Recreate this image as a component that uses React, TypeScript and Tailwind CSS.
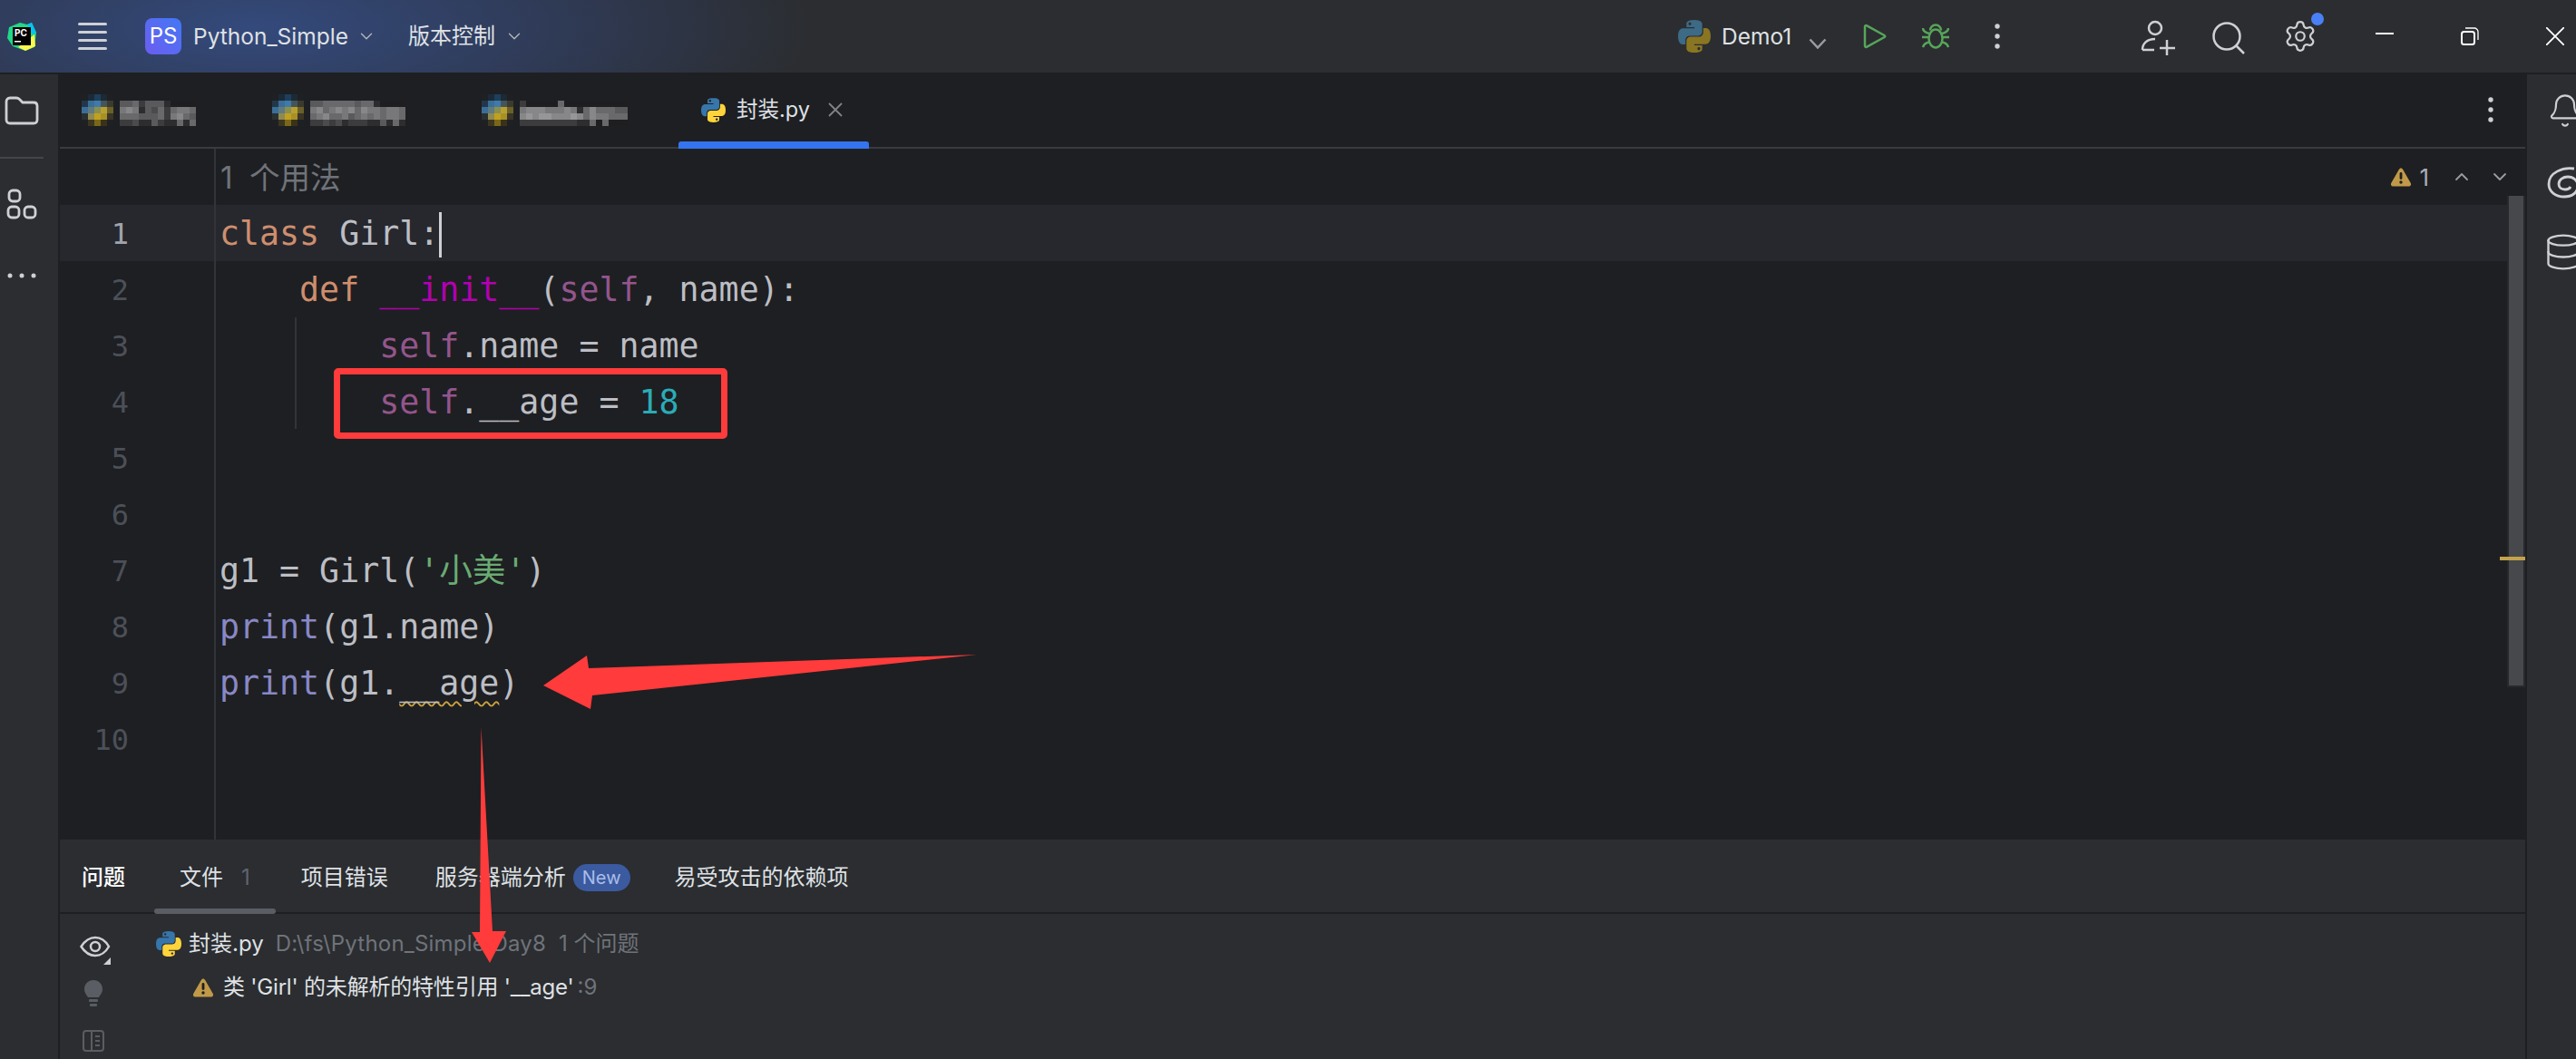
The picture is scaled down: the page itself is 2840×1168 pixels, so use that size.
import { Bell, ChevronDown, ChevronUp, Database, Settings } from 'lucide-react';

const ui = "font-[Inter,'Noto_Sans_CJK_SC',sans-serif]";

const PY_BLUE =
  'M11.914 0C5.82 0 6.2 2.656 6.2 2.656l.007 2.752h5.814v.826H3.9S0 5.789 0 11.969c0 6.18 3.403 5.96 3.403 5.96h2.03v-2.867s-.109-3.42 3.35-3.42h5.766s3.24.052 3.24-3.148V3.202S18.28 0 11.913 0zM8.708 1.85c.578 0 1.046.47 1.046 1.052 0 .581-.468 1.051-1.046 1.051-.579 0-1.046-.47-1.046-1.051 0-.582.467-1.052 1.046-1.052z';
const PY_YELLOW =
  'M12.087 24c6.092 0 5.712-2.656 5.712-2.656l-.007-2.752h-5.814v-.826h8.123s3.9.445 3.9-5.735c0-6.18-3.404-5.96-3.404-5.96h-2.03v2.867s.109 3.42-3.35 3.42H9.451s-3.24-.052-3.24 3.148v5.292S5.72 24 12.087 24zm3.206-1.85c-.578 0-1.046-.47-1.046-1.052 0-.581.468-1.051 1.046-1.051.579 0 1.046.47 1.046 1.051 0 .582-.467 1.052-1.046 1.052z';

function PyIcon({ size, muted }: { size: number; muted?: boolean }) {
  return (
    <svg width={size} height={size} viewBox="0 0 24 24" className="shrink-0">
      <path d={PY_BLUE} fill={muted ? '#3d6a85' : '#3776ab'} />
      <path d={PY_YELLOW} fill={muted ? '#8a7522' : '#ffd43b'} />
    </svg>
  );
}

function WarnIcon({ w, h }: { w: number; h: number }) {
  return (
    <svg width={w} height={h} viewBox="0 0 24 22" className="shrink-0">
      <path d="M12 1.5c1 0 1.7.6 2.2 1.5l8.6 15c.8 1.6 0 3.5-2 3.5H3.2c-2 0-2.8-1.900-2-3.500l8.600-15C10.300 2.100 11 1.500 12 1.500z" fill="#c09a48" />
      <rect x="10.600" y="6" width="2.800" height="8" rx="1.400" fill="#1e1f22" />
      <circle cx="12" cy="17" r="1.700" fill="#1e1f22" />
    </svg>
  );
}

// pixelated tab labels, blurred out in the screenshot
const iconCells = [
  ['#1e2024', '#1a2a38', '#1d3f5c', '#1c2a36', '#1e2024'],
  ['#22384a', '#3b6e96', '#3f7aa8', '#46545a', '#3a3a30'],
  ['#3a6e98', '#5f7a80', '#8a8f50', '#b8a030', '#6a6028'],
  ['#2a3030', '#8e8a50', '#c0a020', '#a89028', '#3a3524'],
  ['#1e2024', '#3d3620', '#7a6818', '#3a3218', '#1e2024'],
];

function Mosaic({ rows }: { rows: string[] }) {
  const w = rows[0].length * 7 + 42;
  return (
    <svg width={w} height={35} viewBox={`0 0 ${w} 35`} className="shrink-0 blur-[0.6px]" shapeRendering="crispEdges">
      {iconCells.map((row, y) =>
        row.map((c, x) => <rect key={`${x}-${y}`} x={x * 7} y={y * 7} width={7} height={7} fill={c} />),
      )}
      {rows.map((row, y) =>
        row.split('').map((c, x) => {
          const g = 30 + Number(c) * 15;
          return <rect key={`t${x}-${y}`} x={42 + x * 7} y={7 + y * 7} width={7} height={7} fill={`rgb(${g},${g},${g + 3})`} />;
        }),
      )}
    </svg>
  );
}

function Row({ n, active, children }: { n?: number; active?: boolean; children?: React.ReactNode }) {
  return (
    <div className={`flex h-[62px] shrink-0 items-center ${active ? 'bg-[#26282e]' : ''}`}>
      <div
        className={`flex h-full w-[172px] shrink-0 items-center justify-end border-r-2 border-[#313438] pt-[2px] pr-[94px] text-[32px] ${active ? 'text-[#a1a3ab]' : 'text-[#4b5059]'}`}
      >
        {n}
      </div>
      <div className="pt-[2px] pl-[4px] whitespace-pre text-[#bcbec4]">{children}</div>
    </div>
  );
}

const Kw = ({ children }: { children: React.ReactNode }) => <span className="text-[#cf8e6d]">{children}</span>;
const Self = ({ children }: { children: React.ReactNode }) => <span className="text-[#94558d]">{children}</span>;
const Fn = ({ children }: { children: React.ReactNode }) => <span className="text-[#8888c6]">{children}</span>;

function Kebab({ size }: { size: number }) {
  return (
    <svg width={12} height={size} viewBox={`0 0 12 ${size}`} className="shrink-0">
      <circle cx="6" cy="4" r="2.700" fill="#ced0d6" />
      <circle cx={6} cy={size / 2} r="2.700" fill="#ced0d6" />
      <circle cx={6} cy={size - 4} r="2.700" fill="#ced0d6" />
    </svg>
  );
}

function TitleBar() {
  return (
    <header
      className={`flex h-20 shrink-0 items-center justify-between bg-[#2b2d30] bg-[radial-gradient(ellipse_620px_190px_at_280px_30px,#344a7c_0%,#2f3a55_55%,#2b2d30_100%)] ${ui}`}
    >
      <div className="flex items-center">
        <svg width="32" height="32" viewBox="0 0 32 32" className="ml-2 shrink-0">
          <polygon points="2,6 14,1 22,3 27,1 32,12 30,28 20,32 6,27 0,18" fill="#21d789" />
          <polygon points="22,3 27,1 32,12 28,14" fill="#07c3f2" />
          <polygon points="30,14 31,27 20,32 12,28" fill="#fcf84a" />
          <rect x="6" y="6" width="20" height="20" fill="#000" />
          <text x="8" y="16" fontSize="10" fontWeight="700" fill="#fff" fontFamily="Inter">
            PC
          </text>
          <rect x="8" y="21" width="7" height="1.500" fill="#fff" />
        </svg>
        <div className="ml-[46px] flex h-[30px] w-8 flex-col justify-between">
          <div className="h-[3px] rounded-full bg-[#ced0d6]" />
          <div className="h-[3px] rounded-full bg-[#ced0d6]" />
          <div className="h-[3px] rounded-full bg-[#ced0d6]" />
          <div className="h-[3px] rounded-full bg-[#ced0d6]" />
        </div>
        <div className="ml-[42px] flex h-10 w-10 items-center justify-center rounded-lg bg-gradient-to-tr from-[#6a5cf0] to-[#3f78f5] text-[24px] text-white">
          PS
        </div>
        <span className="ml-[13px] text-[24.5px] text-[#dfe1e5]">Python_Simple</span>
        <ChevronDown size={22} strokeWidth={1.5} className="ml-[9px] text-[#b4b6bc]" />
        <span className="ml-[35px] text-[24px] text-[#dfe1e5]">版本控制</span>
        <ChevronDown size={22} strokeWidth={1.5} className="ml-[10px] text-[#b4b6bc]" />
      </div>
      <div className="flex items-center pr-[13px]">
        <PyIcon size={36} muted />
        <span className="ml-3 w-[78px] text-[24.5px] text-[#dfe1e5]">Demo1</span>
        <svg width="20" height="12" viewBox="0 0 20 12" className="mt-4 ml-[18px] shrink-0">
          <path d="M1.500 1.500l8.500 9 8.500-9" fill="none" stroke="#9a9ca3" strokeWidth="2.500" />
        </svg>
        <svg width="26" height="28" viewBox="0 0 26 28" className="ml-10 shrink-0">
          <path d="M2 3.500v21c0 1.300 1.300 1.800 2.300 1.200L23.500 15c1-.6 1-1.500 0-2L4.300 2.300C3.300 1.700 2 2.200 2 3.500z" fill="none" stroke="#57a55a" strokeWidth="2.500" />
        </svg>
        <svg width="30" height="28" viewBox="0 0 30 28" className="ml-[39px] shrink-0" fill="none" stroke="#57a55a" strokeWidth="2.500">
          <ellipse cx="15" cy="16.500" rx="7.500" ry="10" />
          <path d="M9 7.500c0-3 2.500-6 6-6s6 3 6 6M1 5c0 3 3 5 7 6M29 5c0 3-3 5-7 6M0 15h7M30 15h-7M1 26c1-3 3-5 7-5.500M29 26c-1-3-3-5-7-5.500" />
        </svg>
        <div className="ml-[47px]">
          <Kebab size={30} />
        </div>
        <svg width="38" height="40" viewBox="0 0 38 40" className="mt-1 ml-[152px] shrink-0" fill="none" stroke="#ced0d6" strokeWidth="2.500">
          <circle cx="16" cy="9" r="7" />
          <path d="M2 33c0-7 5-12 14-12M2 33h13M29 22v17M21 31h17" />
        </svg>
        <svg width="36" height="36" viewBox="0 0 36 36" className="mt-1 ml-[41px] shrink-0" fill="none" stroke="#ced0d6" strokeWidth="2.500">
          <circle cx="16" cy="16" r="14.500" />
          <path d="M26 26l9 9" />
        </svg>
        <div className="relative ml-[42px] h-[38px] w-[38px] shrink-0">
          <Settings size={38} strokeWidth={1.4} className="text-[#ced0d6]" />
          <div className="absolute top-[-7px] right-[-7px] h-[14px] w-[14px] rounded-full bg-[#4a80f5]" />
        </div>
        <div className="mb-[6px] ml-[64px] h-[2px] w-5 bg-white" />
        <svg width="20" height="20" viewBox="0 0 20 20" className="ml-[74px] shrink-0" fill="none" stroke="#fff" strokeWidth="2">
          <rect x="1" y="5" width="14" height="14" rx="2.500" />
          <path d="M5 1h10c2 0 4 2 4 4v9" strokeWidth="1.300" />
        </svg>
        <svg width="20" height="20" viewBox="0 0 20 20" className="ml-[74px] shrink-0" fill="none" stroke="#fff" strokeWidth="1.800">
          <path d="M0 0l20 20M20 0L0 20" />
        </svg>
      </div>
    </header>
  );
}

function LeftStripe() {
  return (
    <aside className="mt-[2px] flex w-[64px] shrink-0 flex-col items-start bg-[#2b2d30]">
      <svg width="38" height="32" viewBox="0 0 38 32" className="mt-6 ml-[5px]" fill="none" stroke="#ced0d6" strokeWidth="2.800">
        <path d="M2 6c0-2 1.500-4 4-4h7c1.500 0 2.500.5 3.500 1.500L20 7h12c2.500 0 4 1.500 4 4v15c0 2.500-1.500 4-4 4H6c-2.500 0-4-1.500-4-4z" />
      </svg>
      <div className="mt-[35px] h-[2px] w-12 bg-[#43454a]" />
      <svg width="34" height="34" viewBox="0 0 34 34" className="mt-[33px] ml-[7px]" fill="none" stroke="#ced0d6" strokeWidth="2.800">
        <rect x="3" y="2" width="12" height="12" rx="4" />
        <rect x="2" y="20" width="12" height="12" rx="4" />
        <rect x="20" y="20" width="12" height="12" rx="4" />
      </svg>
      <svg width="36" height="8" viewBox="0 0 36 8" className="mt-[58px] ml-[6px]">
        <circle cx="5" cy="4" r="2.500" fill="#ced0d6" />
        <circle cx="18" cy="4" r="2.500" fill="#ced0d6" />
        <circle cx="31" cy="4" r="2.500" fill="#ced0d6" />
      </svg>
    </aside>
  );
}

function RightStripe() {
  return (
    <aside className="mt-[2px] flex w-[54px] shrink-0 flex-col items-start overflow-hidden bg-[#2b2d30] pl-[22px]">
      <Bell size={40} strokeWidth={1.300} className="mt-[20px] shrink-0 text-[#ced0d6]" />
      <svg width="36" height="36" viewBox="0 0 36 36" className="mt-[41px] shrink-0" fill="none" stroke="#ced0d6" strokeWidth="2.800">
        <path d="M30 3C18 1 2 7 2 20c0 9 8 14 17 14 8 0 15-4 15-12 0-6-5-10-11-10-5 0-10 3-10 8 0 4 3 6 7 6 3 0 5-1 6-3" />
      </svg>
      <Database size={44} strokeWidth={1.300} className="mt-[37px] -ml-[4px] shrink-0 text-[#ced0d6]" />
    </aside>
  );
}

function Tabs() {
  return (
    <div className="flex h-[84px] shrink-0 items-center border-b-2 border-[#393b40] bg-[#1e1f22]">
      <div className="ml-6 flex items-center">
        <Mosaic rows={['445244410000', '676143525665', '555444526754', '223114211515']} />
      </div>
      <div className="ml-[84px] flex items-center">
        <Mosaic rows={['445555545510000', '675676757665665', '567556456565665', '223231222114151']} />
      </div>
      <div className="ml-[84px] flex items-center">
        <Mosaic rows={['20000050000000000', '67776667615755544', '78788777875766555', '22222222211505000']} />
      </div>
      <div className={`relative ml-[56px] flex h-full w-[210px] items-center pl-[25px] ${ui}`}>
        <PyIcon size={27} />
        <span className="ml-3 text-[23.5px] text-[#dfe1e5]">封装.py</span>
        <svg width="16" height="16" viewBox="0 0 16 16" className="ml-[20px] shrink-0">
          <path d="M1 1l14 14M15 1L1 15" stroke="#7f8289" strokeWidth="1.800" />
        </svg>
        <div className="absolute right-0 bottom-[-2px] left-0 h-2 rounded-t-[3px] bg-[#3574f0]" />
      </div>
      <div className="ml-auto pr-[32px]">
        <Kebab size={30} />
      </div>
    </div>
  );
}

function Editor() {
  return (
    <section className="relative flex min-h-0 flex-1 flex-col font-['DejaVu_Sans_Mono','Noto_Sans_CJK_SC',monospace] text-[36.6px]">
      <Row>
        <span className={`ml-[1px] text-[33.5px] text-[#6f737a] ${ui}`}>
          1 <span className="ml-[9px]">个用法</span>
        </span>
      </Row>
      <Row n={1} active>
        <Kw>class</Kw> Girl:
        <span className="inline-block h-[50px] w-[3px] bg-[#ced0d6] align-middle" />
      </Row>
      <Row n={2}>
        {'    '}
        <Kw>def</Kw> <span className="text-[#b200b2]">__init__</span>(<Self>self</Self>, name):
      </Row>
      <Row n={3}>
        {'        '}
        <Self>self</Self>.name = name
      </Row>
      <Row n={4}>
        {'        '}
        <Self>self</Self>.__age = <span className="text-[#2aacb8]">18</span>
      </Row>
      <Row n={5} />
      <Row n={6} />
      <Row n={7}>
        g1 = Girl(<span className="text-[#6aab73]">'小美'</span>)
      </Row>
      <Row n={8}>
        <Fn>print</Fn>(g1.name)
      </Row>
      <Row n={9}>
        <Fn>print</Fn>(g1.
        <span className="underline decoration-[#c9a240] decoration-wavy decoration-2 underline-offset-[7px]">__age</span>)
      </Row>
      <Row n={10} />
      <div className="w-[172px] flex-1 border-r-2 border-[#313438]" />

      <div className="absolute top-0 right-0 flex h-[62px] items-center pr-[16px]">
        <WarnIcon w={24} h={22} />
        <span className={`ml-[8px] text-[26px] text-[#a8adb5] ${ui}`}>1</span>
        <ChevronUp size={24} strokeWidth={1.800} className="ml-[24px] text-[#9a9ca3]" />
        <ChevronDown size={24} strokeWidth={1.800} className="ml-[18px] text-[#9a9ca3]" />
      </div>
      <div className="absolute top-[186px] left-[259px] h-[123px] w-[2px] bg-[#313438]" />
      <div className="absolute top-[52px] right-0 h-[542px] w-[20px] bg-[#28292c] px-[2px] pb-[2px]">
        <div className="h-full w-4 bg-[#47484b]" />
      </div>
      <div className="absolute top-[450px] right-0 h-1 w-7 bg-[#c4a24d]" />
    </section>
  );
}

function ProblemsPanel() {
  return (
    <section className={`h-[242px] shrink-0 bg-[#2b2d30] ${ui}`}>
      <div className="flex h-[82px] items-center border-b-2 border-[#1e1f22] pt-[4px] pl-6 text-[24px] text-[#dfe1e5]">
        <span className="font-medium text-white">问题</span>
        <div className="relative ml-8 flex h-full items-center px-7">
          <span>文件</span>
          <span className="ml-5 text-[#5f6470]">1</span>
          <div className="absolute right-0 bottom-[-2px] left-0 h-[6px] rounded-[3px] bg-[#5a5d63]" />
        </div>
        <span className="ml-7">项目错误</span>
        <span className="ml-[52px]">服务器端分析</span>
        <span className="ml-2 rounded-[15px] bg-[#3b5aa0] px-[10px] text-[20px] leading-[30px] text-[#a9bde8]">New</span>
        <span className="ml-[49px]">易受攻击的依赖项</span>
      </div>
      <div className="flex">
        <div className="flex w-[106px] shrink-0 flex-col items-start pl-[22px]">
          <svg width="36" height="34" viewBox="0 0 36 34" className="mt-[24px] shrink-0">
            <path d="M1.500 12C6 5 11 2 17 2s11 3 15 10c-4 7-9 10-15 10S6 19 1.500 12z" fill="none" stroke="#ced0d6" strokeWidth="2.500" />
            <circle cx="17" cy="12" r="5" fill="none" stroke="#ced0d6" strokeWidth="2.500" />
            <polygon points="34,24 34,32 26,32" fill="#ced0d6" />
          </svg>
          <svg width="22" height="30" viewBox="0 0 22 30" className="mt-[15px] ml-[4px] shrink-0">
            <path d="M11 0C5 0 1 4.500 1 10c0 4 2.500 6 4 9h12c1.500-3 4-5 4-9 0-5.500-4-10-10-10z" fill="#5a5d63" />
            <rect x="6" y="21" width="10" height="3" rx="1" fill="#5a5d63" />
            <rect x="7" y="26" width="8" height="3" rx="1" fill="#5a5d63" />
          </svg>
          <svg width="24" height="24" viewBox="0 0 24 24" className="mt-[25px] ml-[3px] shrink-0" fill="none" stroke="#5a5d63" strokeWidth="2">
            <rect x="1" y="1" width="22" height="22" rx="3" />
            <path d="M10 1v22M14 7h5M14 12h5M14 17h5" />
          </svg>
        </div>
        <div className="text-[24px]">
          <div className="mt-[15px] flex items-center">
            <PyIcon size={28} />
            <span className="ml-2 text-[#dfe1e5]">封装.py</span>
            <span className="ml-[13px] tracking-[0.2px] text-[#6f737a]">D:\fs\Python_Simple\Day8</span>
            <span className="ml-[14px] text-[#6f737a]">1 个问题</span>
          </div>
          <div className="mt-[12px] ml-10 flex items-center text-[#dfe1e5]">
            <WarnIcon w={24} h={22} />
            <span className="ml-[10px] tracking-[-0.2px]">类 'Girl' 的未解析的特性引用 '__age'</span>
            <span className="ml-1 text-[#6f737a]">:9</span>
          </div>
        </div>
      </div>
    </section>
  );
}

export default function App() {
  return (
    <div className="relative flex h-[1168px] w-[2840px] flex-col overflow-hidden bg-[#1e1f22]">
      <TitleBar />
      <div className="flex min-h-0 flex-1">
        <LeftStripe />
        <main className="mr-[2px] ml-[2px] flex min-w-0 flex-1 flex-col">
          <Tabs />
          <Editor />
          <ProblemsPanel />
        </main>
        <RightStripe />
      </div>

      {/* red annotations drawn on top of the screenshot */}
      <div className="pointer-events-none absolute top-[406px] left-[368px] h-[78px] w-[434px] rounded-[5px] border-[7px] border-[#ff3b3b]" />
      <svg width="2840" height="1168" viewBox="0 0 2840 1168" className="pointer-events-none absolute top-0 left-0">
        <polygon points="599,756 647,723 649,737 1077,722 653,767 651,782" fill="#ff3b3b" />
        <polygon points="530.500,802 543,1027 558,1027 540,1062 520,1028 529,1028" fill="#ff3b3b" />
      </svg>
    </div>
  );
}
